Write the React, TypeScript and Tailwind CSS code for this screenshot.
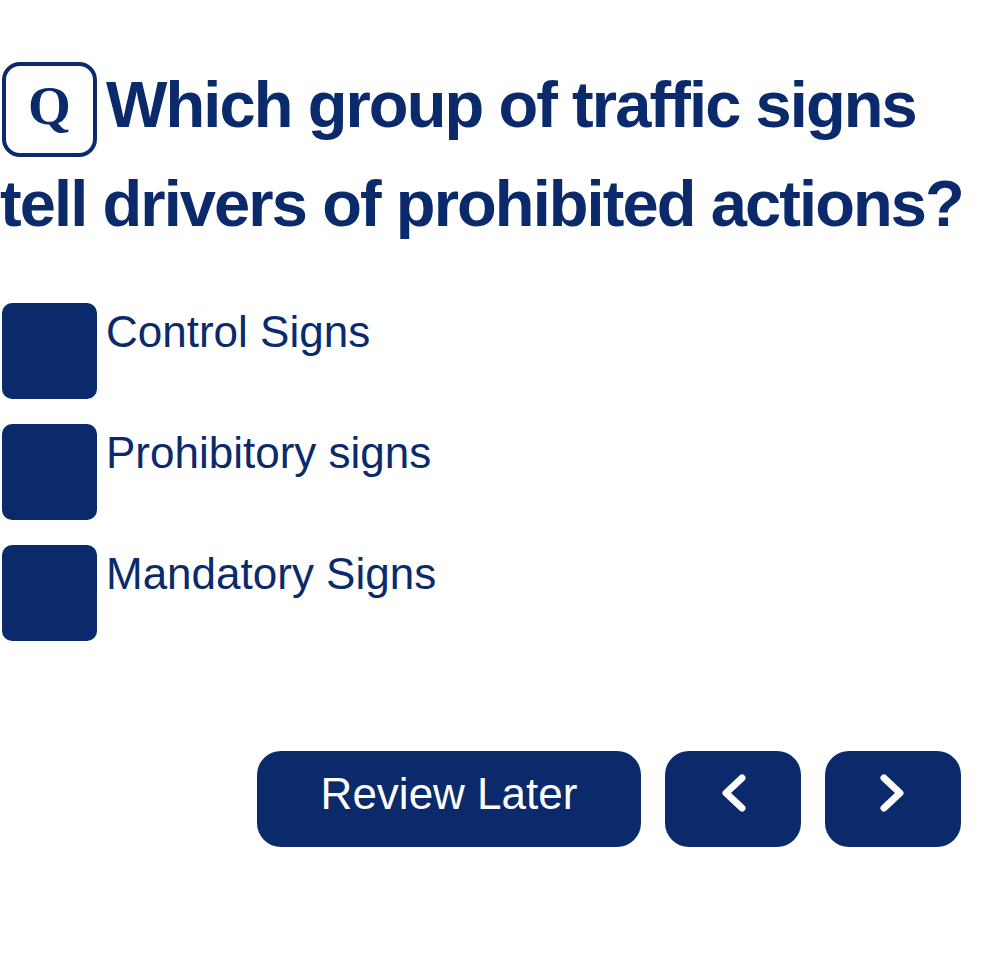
import React from "react";

const options = ["Control Signs", "Prohibitory signs", "Mandatory Signs"];

export default function App() {
  return (
    <div
      className="min-h-[970px] w-full bg-white text-[#0a2a6b]"
      style={{ fontFamily: '"Liberation Sans", Arial, Helvetica, sans-serif' }}
    >
      <h1 className="pt-[55px] text-[65px] font-bold leading-[99px] tracking-[-1.9px]">
        <span className="ml-[2px] mr-[9px] my-[-4px] inline-flex h-[95px] w-[95px] items-center justify-center rounded-[18px] border-[4px] border-[#0a2a6b] pb-[9px] align-middle tracking-normal">
          <span
            className="text-[55px] font-bold leading-none"
            style={{ fontFamily: '"Liberation Serif", "Times New Roman", serif' }}
          >
            Q
          </span>
        </span>
        Which group of traffic signs tell drivers of prohibited actions?
      </h1>

      <div className="mt-[50px] flex flex-col gap-[25px]">
        {options.map((o) => (
          <div key={o} className="flex items-start gap-[9px]">
            <div className="ml-[2px] h-[96px] w-[95px] shrink-0 rounded-[10px] bg-[#0a2a6b]" />
            <span className="text-[44px] leading-[57px]">{o}</span>
          </div>
        ))}
      </div>

      <div className="mt-[110px] flex justify-end gap-[24px] pr-[31px]">
        <button className="flex h-[96px] w-[384px] items-center justify-center rounded-[24px] bg-[#0a2a6b] pb-[10px] text-[44px] leading-none text-white">
          Review Later
        </button>
        <button
          aria-label="Previous"
          className="flex h-[96px] w-[136px] items-center justify-center rounded-[24px] bg-[#0a2a6b] pb-[13px] pl-[2px]"
        >
          <svg width="28" height="40" viewBox="0 0 28 40" fill="none">
            <path
              d="M22 5 L6 20 L22 35"
              stroke="white"
              strokeWidth="7"
              strokeLinecap="round"
              strokeLinejoin="round"
            />
          </svg>
        </button>
        <button
          aria-label="Next"
          className="flex h-[96px] w-[136px] items-center justify-center rounded-[24px] bg-[#0a2a6b] pb-[13px] pr-[2px]"
        >
          <svg width="28" height="40" viewBox="0 0 28 40" fill="none">
            <path
              d="M6 5 L22 20 L6 35"
              stroke="white"
              strokeWidth="7"
              strokeLinecap="round"
              strokeLinejoin="round"
            />
          </svg>
        </button>
      </div>
    </div>
  );
}
